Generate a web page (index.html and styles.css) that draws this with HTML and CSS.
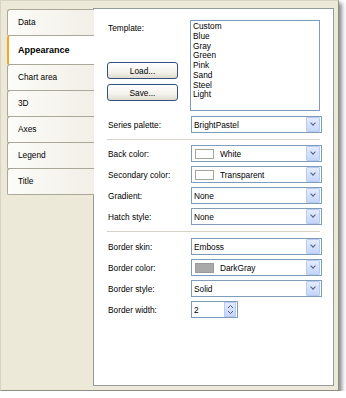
FILE: index.html
```html
<!DOCTYPE html>
<html>
<head>
    <title>Chart Appearance</title>
    <link rel="stylesheet" href="styles.css">
</head>
<body>
    <div class="window">
        <div class="tabs">
            <div class="tab">Data</div>
            <div class="tab selected">Appearance</div>
            <div class="tab">Chart area</div>
            <div class="tab">3D</div>
            <div class="tab">Axes</div>
            <div class="tab">Legend</div>
            <div class="tab">Title</div>
        </div>

        <div class="panel">
            <div class="template-row">
                <div class="template-left">
                    <div class="label">Template:</div>
                    <button class="btn btn-first">Load...</button>
                    <button class="btn">Save...</button>
                </div>
                <div class="listbox">
                    <div>Custom</div>
                    <div>Blue</div>
                    <div>Gray</div>
                    <div>Green</div>
                    <div>Pink</div>
                    <div>Sand</div>
                    <div>Steel</div>
                    <div>Light</div>
                </div>
            </div>

            <div class="row">
                <div class="label">Series palette:</div>
                <div class="combo"><span class="value">BrightPastel</span><span class="drop"></span></div>
            </div>

            <div class="separator"></div>

            <div class="row">
                <div class="label">Back color:</div>
                <div class="combo"><span class="swatch"></span><span class="value">White</span><span class="drop"></span></div>
            </div>
            <div class="row">
                <div class="label">Secondary color:</div>
                <div class="combo"><span class="swatch"></span><span class="value">Transparent</span><span class="drop"></span></div>
            </div>
            <div class="row">
                <div class="label">Gradient:</div>
                <div class="combo"><span class="value">None</span><span class="drop"></span></div>
            </div>
            <div class="row">
                <div class="label">Hatch style:</div>
                <div class="combo"><span class="value">None</span><span class="drop"></span></div>
            </div>

            <div class="separator second"></div>

            <div class="row">
                <div class="label">Border skin:</div>
                <div class="combo"><span class="value">Emboss</span><span class="drop"></span></div>
            </div>
            <div class="row">
                <div class="label">Border color:</div>
                <div class="combo"><span class="swatch gray"></span><span class="value">DarkGray</span><span class="drop"></span></div>
            </div>
            <div class="row">
                <div class="label">Border style:</div>
                <div class="combo"><span class="value">Solid</span><span class="drop"></span></div>
            </div>
            <div class="row">
                <div class="label">Border width:</div>
                <div class="spinner">
                    <span class="value">2</span>
                    <span class="spin">
                        <svg width="7" height="11" viewBox="0 0 7 11">
                            <path d="M1 4 L3.5 1.5 L6 4" fill="none" stroke="#4d6185" stroke-width="1"/>
                            <path d="M1 7 L3.5 9.5 L6 7" fill="none" stroke="#4d6185" stroke-width="1"/>
                        </svg>
                    </span>
                </div>
            </div>
        </div>
    </div>
</body>
</html>
```

FILE: styles.css
```css
body {
    margin: 0;
    background: #ffffff;
    font-family: "Liberation Sans", Arial, sans-serif;
    font-size: 8.3px;
    color: #000;
}
.window {
    width: 327px;
    height: 378px;
    padding: 7px 4px 4px 6px;
    display: flex;
    background: #ece9d8;
    border: 1px solid #d8d4c2;
    border-right-color: #8f8d80;
    border-bottom-color: #8f8d80;
    box-shadow: 3px 3px 4px rgba(0,0,0,0.45);
}
.tabs {
    width: 90px;
    margin-top: 1px;
    margin-right: -1px;
    position: relative;
    z-index: 1;
}
.tab {
    height: 25px;
    line-height: 25px;
    padding-left: 10px;
    border: 1px solid #aca899;
    border-right: none;
    border-top-left-radius: 3px;
    border-bottom-left-radius: 2px;
    margin-bottom: -1px;
    background: linear-gradient(to right, #fcfcf9, #f1efe6);
}
.tab.selected {
    height: 28px;
    line-height: 28px;
    font-weight: bold;
    font-size: 9px;
    background: #fff;
    border-left: 2px solid #f7a51b;
    padding-left: 9px;
}
.panel {
    flex: 1;
    background: #fff;
    border: 1px solid #919b9c;
    padding: 11px 11px 0 13px;
}
.label {
    width: 83px;
    padding-left: 1px;
    flex-shrink: 0;
}
.template-row {
    display: flex;
}
.template-left {
    width: 83px;
    display: flex;
    flex-direction: column;
    align-items: flex-start;
}
.template-left .label {
    padding-top: 3px;
    height: 10px;
}
.btn {
    width: 71px;
    height: 17px;
    margin: 0;
    padding: 0;
    font-family: inherit;
    font-size: 8.3px;
    color: #000;
    border: 1px solid #36507e;
    border-radius: 3px;
    background: linear-gradient(#ffffff, #f3f2ec 60%, #dedbcf);
    margin-top: 5px;
}
.btn-first {
    margin-top: 29px;
}
.listbox {
    width: 126px;
    height: 88px;
    border: 1px solid #7f9db9;
    padding: 1px 0 0 2px;
    line-height: 9.75px;
}
.row {
    display: flex;
    align-items: center;
    height: 17px;
    margin-top: 4px;
}
.template-row + .row {
    margin-top: 5px;
}
.combo {
    width: 127px;
    height: 15px;
    border: 1px solid #7f9db9;
    display: flex;
    align-items: center;
    padding-left: 2px;
    position: relative;
}
.combo .value {
    flex: 1;
}
.swatch {
    width: 17px;
    height: 8px;
    border: 1px solid #a7a59b;
    background: #fff;
    margin: 0 6px 0 1px;
}
.swatch.gray {
    background: #a9a9a9;
    border-color: #9a9a9a;
}
.drop {
    width: 12px;
    height: 13px;
    margin-right: 1px;
    border: 1px solid #b9cbf3;
    border-radius: 1px;
    background: linear-gradient(#e3ebfd, #c6d6fa);
    position: relative;
}
.drop::after {
    content: "";
    position: absolute;
    left: 4px;
    top: 3px;
    width: 3px;
    height: 3px;
    border-right: 1.5px solid #4d6185;
    border-bottom: 1.5px solid #4d6185;
    transform: rotate(45deg);
}
.separator {
    height: 1px;
    background: #d6d3c6;
    margin: 6px 0 5px 0;
    width: 213px;
}
.separator.second {
    margin: 6px 0 6px 0;
}
.spinner {
    width: 43px;
    height: 15px;
    border: 1px solid #7f9db9;
    display: flex;
    align-items: center;
    padding-left: 2px;
}
.spinner .value {
    flex: 1;
}
.spin {
    width: 10px;
    height: 13px;
    margin-right: 1px;
    border: 1px solid #b9cbf3;
    background: linear-gradient(#e3ebfd, #c6d6fa);
    display: flex;
    align-items: center;
    justify-content: center;
}
```
